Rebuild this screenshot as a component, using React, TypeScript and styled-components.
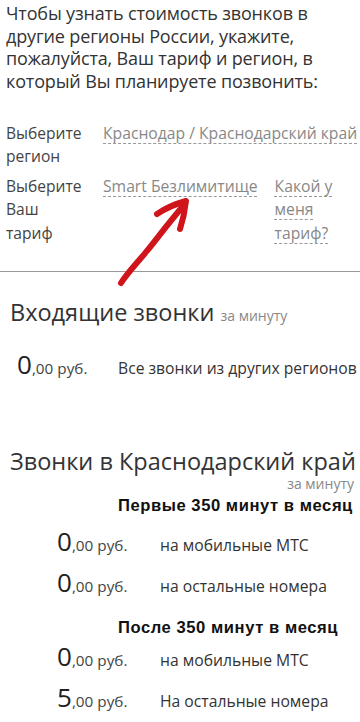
import React from "react";
import styled, { createGlobalStyle } from "styled-components";

const Global = createGlobalStyle`
  html, body { margin: 0; padding: 0; background: #fff; }
  body { font-family: "Open Sans", "Noto Sans", sans-serif; color: #333; }
`;

const Page = styled.div`
  position: relative;
  width: 360px;
  height: 722px;
  overflow: hidden;
  background: #fff;
`;

const Intro = styled.p`
  margin: 0;
  padding: 2px 6px 0 6px;
  font-size: 18px;
  line-height: 22.7px;
  color: #333;
  letter-spacing: -0.15px;
`;

const Form = styled.div`
  display: grid;
  grid-template-columns: 97px 1fr;
  row-gap: 6px;
  padding: 29px 0 0 6px;
`;

const Label = styled.div`
  font-size: 15.6px;
  line-height: 23.5px;
  color: #444;
`;

const Values = styled.div`
  display: flex;
  gap: 17px;
  align-items: flex-start;
`;

const DashLink = styled.span<{ $w?: number }>`
  font-size: 15.7px;
  line-height: 23.5px;
  color: #888;
  white-space: ${(p) => (p.$w ? "normal" : "nowrap")};
  width: ${(p) => (p.$w ? `${p.$w}px` : "auto")};
  text-decoration: underline dashed #999;
  text-underline-offset: 4px;
  text-decoration-thickness: 1px;
`;

const Rule = styled.hr`
  border: 0;
  border-top: 1px solid #999;
  margin: 26px 0 0 0;
`;

const Heading = styled.h2<{ $top: number }>`
  margin: ${(p) => p.$top}px 0 0 0;
  padding-left: 10px;
  font-weight: 400;
  font-size: 23.5px;
  line-height: 30px;
  height: 30px;
  color: #333;
  white-space: nowrap;
`;

const PerMinute = styled.span`
  font-size: 14px;
  color: #888;
`;

const PerMinuteRight = styled.div`
  text-align: right;
  padding-right: 6px;
  font-size: 14px;
  line-height: 16px;
  height: 16px;
  color: #888;
`;

const Sub = styled.div<{ $top: number }>`
  padding-left: 118px;
  margin-top: ${(p) => p.$top}px;
  font-family: "Liberation Sans", Arial, sans-serif;
  font-weight: 700;
  font-size: 16.6px;
  letter-spacing: 0.55px;
  line-height: 20px;
  height: 20px;
  color: #111;
  white-space: nowrap;
`;

const PriceRow = styled.div<{ $left: number; $top: number }>`
  display: flex;
  align-items: baseline;
  padding-left: ${(p) => p.$left}px;
  margin-top: ${(p) => p.$top}px;
  height: 30px;
  line-height: 30px;
  white-space: nowrap;
`;

const Price = styled.span<{ $w: number }>`
  width: ${(p) => p.$w}px;
  flex: none;
  font-size: 15.3px;
  color: #444;
`;

const Big = styled.span`
  font-size: 26px;
  color: #222;
`;

const Desc = styled.span`
  font-size: 15.7px;
  color: #333;
`;

const Arrow = styled.svg`
  position: absolute;
  left: 0;
  top: 0;
  pointer-events: none;
`;

function Row({ big, left, w, top, text }: { big: string; left: number; w: number; top: number; text: string }) {
  return (
    <PriceRow $left={left} $top={top}>
      <Price $w={w}>
        <Big>{big}</Big>,00 руб.
      </Price>
      <Desc>{text}</Desc>
    </PriceRow>
  );
}

export default function App() {
  return (
    <Page>
      <Global />
      <Intro>
        Чтобы узнать стоимость звонков в другие регионы России, укажите, пожалуйста, Ваш тариф и регион, в
        который Вы планируете позвонить:
      </Intro>
      <Form>
        <Label>
          Выберите
          <br />
          регион
        </Label>
        <Values>
          <DashLink>Краснодар / Краснодарский край</DashLink>
        </Values>
        <Label>
          Выберите
          <br />
          Ваш
          <br />
          тариф
        </Label>
        <Values>
          <DashLink>Smart Безлимитище</DashLink>
          <DashLink $w={64}>Какой у меня тариф?</DashLink>
        </Values>
      </Form>
      <Rule />
      <Heading $top={25}>
        Входящие звонки <PerMinute>за минуту</PerMinute>
      </Heading>
      <Row big="0" left={17} w={101} top={22} text="Все звонки из других регионов" />
      <Heading $top={67}>Звонки в Краснодарский край</Heading>
      <PerMinuteRight>за минуту</PerMinuteRight>
      <Sub $top={4}>Первые 350 минут в месяц</Sub>
      <Row big="0" left={57} w={103} top={10} text="на мобильные МТС" />
      <Row big="0" left={57} w={103} top={11} text="на остальные номера" />
      <Sub $top={21}>После 350 минут в месяц</Sub>
      <Row big="0" left={57} w={103} top={3} text="на мобильные МТС" />
      <Row big="5" left={57} w={103} top={11} text="На остальные номера" />
      <Arrow width="360" height="722" viewBox="0 0 360 722">
        <path
          d="M121 283 C 128 272, 138 262, 146 252 C 156 240, 166 226, 184 205"
          fill="none"
          stroke="#d0141b"
          strokeWidth="6"
          strokeLinecap="round"
          strokeLinejoin="round"
        />
        <path
          d="M157 214 C 166 208, 175 204, 186 201 C 185 210, 183 220, 180 229"
          fill="none"
          stroke="#d0141b"
          strokeWidth="6"
          strokeLinecap="round"
          strokeLinejoin="round"
        />
      </Arrow>
    </Page>
  );
}
